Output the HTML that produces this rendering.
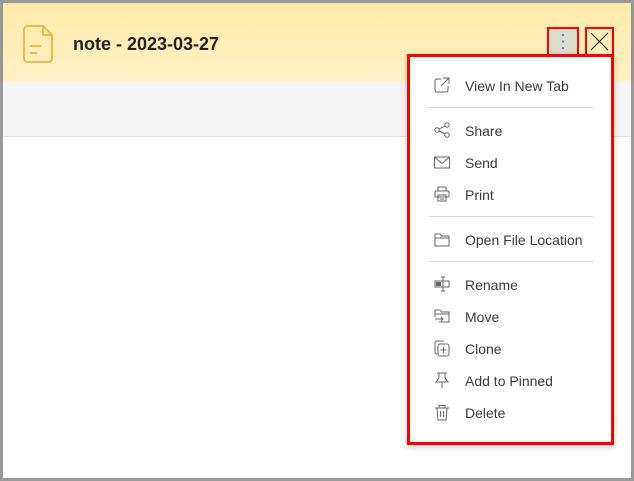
<!DOCTYPE html>
<html><head><style>
*{margin:0;padding:0;box-sizing:border-box}
body{width:634px;height:481px;background:#9a9a9a;font-family:"Liberation Sans",Arial,sans-serif;position:relative;overflow:hidden}
.win{position:absolute;left:3px;top:3px;width:628px;height:475px;background:#fff}
.hdr{position:absolute;left:0;top:0;width:628px;height:79px;background:linear-gradient(#fde9a8,#fff1c6);box-shadow:0 1px 3px rgba(0,0,0,.12)}
.band{position:absolute;left:0;top:79px;width:628px;height:55px;background:#f4f4f4;border-bottom:1px solid #e4e4e4}
.title{position:absolute;left:70px;top:31px;font-size:18px;font-weight:bold;color:#222}
.dots{position:absolute;left:544px;top:24px;width:32px;height:29px;border:2px solid #f00;background:#dcdccb}
.close{position:absolute;left:582px;top:24px;width:29px;height:29px;border:2px solid #f00}
.menu{position:absolute;left:404px;top:51px;width:207px;height:391px;border:3px solid #f00;background:#fff;box-shadow:0 2px 6px rgba(0,0,0,.2)}
.it{position:absolute;left:55px;font-size:14px;color:#3a3a3a}
.ic{position:absolute;left:24px}
.sep{position:absolute;left:19px;width:164px;height:1px;background:#d8d8d8}
svg{overflow:visible}
</style></head><body>
<div class="win">
<div class="hdr"></div>
<div class="band"></div>
<svg style="position:absolute;left:19px;top:21px" width="32" height="40" viewBox="0 0 32 40"><path d="M5 2H21L30 11V34Q30 38 26 38H6Q2 38 2 34V6Q2 2 6 2Z M21 2V11H30" fill="none" stroke="#e8b440" stroke-width="1.8"/><path d="M8 22H19M8 29H15" stroke="#e8b440" stroke-width="1.8"/></svg>
<div class="title">note - 2023-03-27</div>
<div class="dots"><svg width="28" height="25"><circle cx="14" cy="6" r="1.1" fill="#3b82f6"/><circle cx="14" cy="12.5" r="1.1" fill="#3b82f6"/><circle cx="14" cy="19" r="1.1" fill="#3b82f6"/></svg></div>
<div class="close"><svg width="25" height="25"><path d="M4 4L21 21M21 4L4 21" stroke="#222" stroke-width="1.1"/></svg></div>
<div class="menu">
<svg class="ic" style="top:20px" width="16" height="16" viewBox="0 0 16 16" fill="none" stroke="#666" stroke-width="1"><path d="M7 2H3Q1 2 1 4V13Q1 15 3 15H12Q14 15 14 13V9M9 1H15V7M15 1L7 9"/></svg>
<div class="it" style="top:21px">View In New Tab</div>
<div class="sep" style="top:50px"></div>
<svg class="ic" style="top:65px" width="16" height="16" viewBox="0 0 16 16" fill="none" stroke="#666" stroke-width="1"><circle cx="3" cy="8" r="2.2"/><circle cx="13" cy="3" r="2.2"/><circle cx="13" cy="13" r="2.2"/><path d="M5 7L11 4M5 9L11 12"/></svg>
<div class="it" style="top:66px">Share</div>
<svg class="ic" style="top:99px" width="16" height="14" viewBox="0 0 16 14" fill="none" stroke="#666" stroke-width="1"><rect x="0.5" y="1" width="15" height="11"/><path d="M1 1.5L8 7.5L15 1.5"/></svg>
<div class="it" style="top:98px">Send</div>
<svg class="ic" style="top:129px" width="16" height="16" viewBox="0 0 16 16" fill="none" stroke="#666" stroke-width="1"><rect x="4" y="1" width="8" height="4"/><rect x="1" y="5" width="14" height="6" rx="1"/><rect x="4" y="9" width="8" height="6"/><path d="M6 11H10M6 13H10"/></svg>
<div class="it" style="top:130px">Print</div>
<div class="sep" style="top:159px"></div>
<svg class="ic" style="top:175px" width="16" height="15" viewBox="0 0 16 15" fill="none" stroke="#666" stroke-width="1"><path d="M1 2H6L7.5 4H15V14H1Z M1 6H15"/></svg>
<div class="it" style="top:175px">Open File Location</div>
<div class="sep" style="top:204px"></div>
<svg class="ic" style="top:219px" width="16" height="16" viewBox="0 0 16 16" fill="none" stroke="#666" stroke-width="1"><rect x="1" y="5" width="14" height="6"/><rect x="2.5" y="6.5" width="4" height="3" fill="#666"/><path d="M9 1V15M7 1H11M7 15H11"/></svg>
<div class="it" style="top:220px">Rename</div>
<svg class="ic" style="top:251px" width="16" height="16" viewBox="0 0 16 16" fill="none" stroke="#666" stroke-width="1"><path d="M1 9V2H6L7.5 4H15V14H5M1 6H15M1 11H9M7 9L9 11L7 13"/></svg>
<div class="it" style="top:252px">Move</div>
<svg class="ic" style="top:283px" width="16" height="17" viewBox="0 0 16 17" fill="none" stroke="#666" stroke-width="1"><path d="M3 14Q1 14 1 12V3Q1 1 3 1H10"/><rect x="4" y="4" width="11" height="12" rx="2"/><path d="M9.5 7V13M6.5 10H12.5"/></svg>
<div class="it" style="top:284px">Clone</div>
<svg class="ic" style="top:315px" width="16" height="17" viewBox="0 0 16 17" fill="none" stroke="#666" stroke-width="1"><path d="M3 1H13M5 1V6L2 10H14L11 6V1M8 10V16"/></svg>
<div class="it" style="top:316px">Add to Pinned</div>
<svg class="ic" style="top:347px" width="16" height="17" viewBox="0 0 16 17" fill="none" stroke="#666" stroke-width="1"><path d="M1 4H15M5 4V1.5H11V4M3 4L4 16H12L13 4M6.5 7V13M9.5 7V13"/></svg>
<div class="it" style="top:348px">Delete</div>
</div>
</div>
</body></html>
